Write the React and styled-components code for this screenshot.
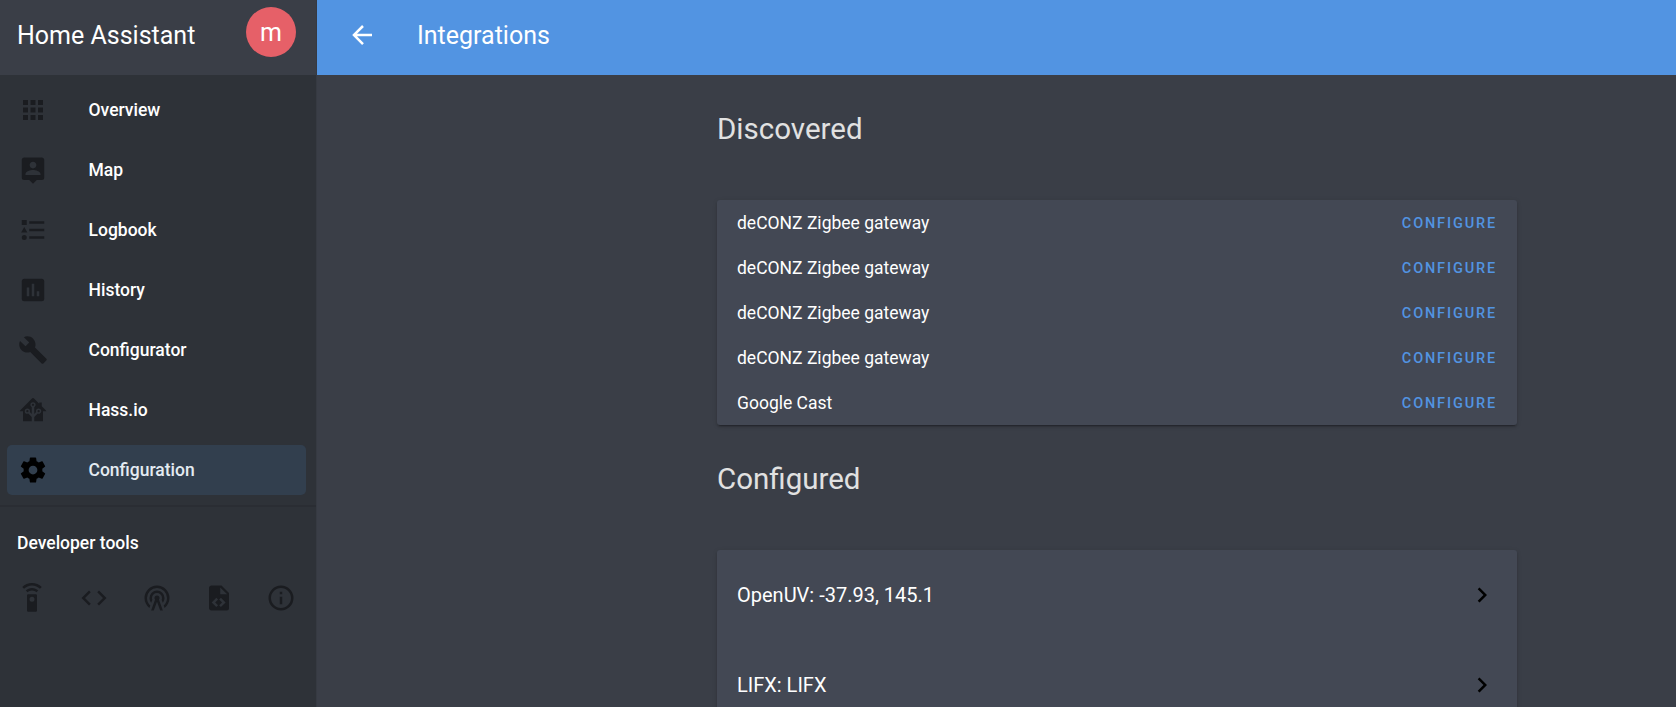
import React from "react";
import styled, { createGlobalStyle } from "styled-components";

const Global = createGlobalStyle`
  html, body {
    margin: 0;
    padding: 0;
    height: 100%;
    overflow: hidden;
    background: #3a3e47;
    font-family: Roboto, "Noto Sans", sans-serif;
  }
`;

const Layout = styled.div`
  display: grid;
  grid-template-columns: 317px 1fr;
  height: 100vh;
  overflow: hidden;
`;

const Sidebar = styled.aside`
  display: flex;
  flex-direction: column;
  background: #2e3238;
  border-right: 1px solid #363a42;
  box-sizing: border-box;
`;

const SideHeader = styled.div`
  height: 75px;
  flex: none;
  display: flex;
  align-items: flex-start;
  justify-content: space-between;
  padding: 0 20px 0 17px;
  background: #3a3e47;
  color: #fff;
  font-size: 25px;
`;

const Brand = styled.span`
  line-height: 71px;
`;

const Avatar = styled.div`
  width: 50px;
  height: 50px;
  margin-top: 7px;
  border-radius: 50%;
  background: #e66068;
  color: #fff;
  font-size: 25px;
  display: flex;
  align-items: center;
  justify-content: center;
`;

const Nav = styled.nav`
  display: flex;
  flex-direction: column;
  gap: 10px;
  padding: 10px 10px 10px 7px;
  border-bottom: 2px solid #2a2d33;
`;

const NavItem = styled.div`
  height: 50px;
  padding-left: 11px;
  display: flex;
  align-items: center;
  border-radius: 5px;
  background: ${(p) => (p.$active ? "#323f4e" : "transparent")};
  color: ${(p) => (p.$active ? "#e4ebf2" : "#fff")};
  font-size: 17.5px;
  font-weight: 500;
`;

const NavIcon = styled.svg`
  width: 30px;
  height: 30px;
  flex: none;
  margin-right: 40.5px;
  fill: ${(p) => (p.$active ? "#000" : "#1a1c20")};
`;

const SubHeader = styled.div`
  margin-top: 22px;
  padding-left: 17px;
  height: 28px;
  line-height: 28px;
  color: #fff;
  font-size: 17.5px;
  font-weight: 500;
`;

const DevTools = styled.div`
  display: flex;
  gap: 32.25px;
  padding: 26px 0 0 17px;
`;

const DevIcon = styled.svg`
  width: 30px;
  height: 30px;
  flex: none;
  fill: #1a1c20;
`;

const Main = styled.div`
  display: flex;
  flex-direction: column;
  min-width: 0;
`;

const TopBar = styled.header`
  height: 75px;
  flex: none;
  display: flex;
  align-items: flex-start;
  padding-left: 30px;
  background: #5294e2;
  color: #fff;
  font-size: 25px;
  line-height: 71px;
`;

const BackIcon = styled.svg`
  width: 30px;
  height: 30px;
  flex: none;
  margin: 20px 40px 0 0;
  fill: #fff;
`;

const Content = styled.main`
  padding-left: 400px;
  width: 800px;
`;

const SectionTitle = styled.h2`
  margin: 34px 0 51px;
  height: 40px;
  line-height: 40px;
  color: #e1e1e1;
  font-size: 29.5px;
  font-weight: 400;
`;

const Card = styled.div`
  background: #434854;
  border-radius: 3px;
  box-shadow: 0 2px 2px rgba(0, 0, 0, 0.14), 0 1px 5px rgba(0, 0, 0, 0.12),
    0 3px 1px -2px rgba(0, 0, 0, 0.2);
`;

const Row = styled.div`
  height: ${(p) => (p.$tall ? "90px" : "45px")};
  display: flex;
  align-items: center;
  justify-content: space-between;
  padding: 0 20px;
  color: #fff;
  font-size: ${(p) => (p.$tall ? "20px" : "17.5px")};
`;

const ConfigureButton = styled.span`
  padding-top: 2px;
  color: #5294e2;
  font-size: 14.5px;
  font-weight: 500;
  letter-spacing: 1.85px;
`;

const Chevron = styled.svg`
  width: 30px;
  height: 30px;
  fill: #000;
`;

const Icon = ({ as: Comp, d, $active }) => (
  <Comp viewBox="0 0 24 24" $active={$active}>
    <path d={d} />
  </Comp>
);

const navItems = [
  {
    label: "Overview",
    d: "M16,20H20V16H16M16,14H20V10H16M10,8H14V4H10M16,8H20V4H16M10,14H14V10H10M4,14H8V10H4M4,20H8V16H4M10,20H14V16H10M4,8H8V4H4V8Z",
  },
  {
    label: "Map",
    d: "M18,16H6V15.1C6,13.1 10,12 12,12C14,12 18,13.1 18,15.1M12,5.3C13.5,5.3 14.7,6.5 14.7,8C14.7,9.5 13.5,10.7 12,10.7C10.5,10.7 9.3,9.5 9.3,8C9.3,6.5 10.5,5.3 12,5.3M19,2H5C3.89,2 3,2.89 3,4V18A2,2 0 0,0 5,20H9L12,23L15,20H19A2,2 0 0,0 21,18V4C21,2.89 20.1,2 19,2Z",
  },
  {
    label: "Logbook",
    d: "M5,9.5L7.5,14H2.5L5,9.5M3,4H7V8H3V4M5,20A2,2 0 0,0 7,18A2,2 0 0,0 5,16A2,2 0 0,0 3,18A2,2 0 0,0 5,20M9,5V7H21V5H9M9,19H21V17H9V19M9,13H21V11H9V13Z",
  },
  {
    label: "History",
    d: "M17,17H15V13H17M13,17H11V7H13M9,17H7V10H9M19,3H5C3.89,3 3,3.89 3,5V19A2,2 0 0,0 5,21H19A2,2 0 0,0 21,19V5C21,3.89 20.1,3 19,3Z",
  },
  {
    label: "Configurator",
    d: "M22.7,19L13.6,9.9C14.5,7.6 14,4.9 12.1,3C10.1,1 7.1,0.6 4.7,1.7L9,6L6,9L1.6,4.7C0.4,7.1 0.9,10.1 2.9,12.1C4.8,14 7.5,14.5 9.8,13.6L18.9,22.7C19.3,23.1 19.9,23.1 20.3,22.7L22.6,20.4C23.1,20 23.1,19.3 22.7,19Z",
  },
  {
    label: "Hass.io",
    d: "M21.8,13H20V21H13V17.67L15.79,14.88L16.5,15C17.66,15 18.6,14.06 18.6,12.9C18.6,11.74 17.66,10.8 16.5,10.8A2.1,2.1 0 0,0 14.4,12.9L14.5,13.61L13,15.13V9.65C13.66,9.29 14.1,8.6 14.1,7.8A2.1,2.1 0 0,0 12,5.7A2.1,2.1 0 0,0 9.9,7.8C9.9,8.6 10.34,9.29 11,9.65V15.13L9.5,13.61L9.6,12.9A2.1,2.1 0 0,0 7.5,10.8A2.1,2.1 0 0,0 5.4,12.9A2.1,2.1 0 0,0 7.5,15L8.21,14.88L11,17.67V21H4V13H2.25C1.83,13 1.42,13 1.42,12.79C1.43,12.57 1.85,12.15 2.28,11.72L11,3C11.33,2.67 11.67,2.33 12,2.33C12.33,2.33 12.67,2.67 13,3L17,7V6H19V9L21.78,11.78C22.18,12.18 22.59,12.59 22.6,12.8C22.6,13 22.2,13 21.8,13M7.5,12A0.9,0.9 0 0,1 8.4,12.9A0.9,0.9 0 0,1 7.5,13.8A0.9,0.9 0 0,1 6.6,12.9A0.9,0.9 0 0,1 7.5,12M16.5,12C17,12 17.4,12.4 17.4,12.9C17.4,13.4 17,13.8 16.5,13.8A0.9,0.9 0 0,1 15.6,12.9A0.9,0.9 0 0,1 16.5,12M12,6.9C12.5,6.9 12.9,7.3 12.9,7.8C12.9,8.3 12.5,8.7 12,8.7C11.5,8.7 11.1,8.3 11.1,7.8C11.1,7.3 11.5,6.9 12,6.9Z",
  },
  {
    label: "Configuration",
    active: true,
    d: "M12,15.5A3.5,3.5 0 0,1 8.5,12A3.5,3.5 0 0,1 12,8.5A3.5,3.5 0 0,1 15.5,12A3.5,3.5 0 0,1 12,15.5M19.43,12.97C19.47,12.65 19.5,12.33 19.5,12C19.5,11.67 19.47,11.34 19.43,11L21.54,9.37C21.73,9.22 21.78,8.95 21.66,8.73L19.66,5.27C19.54,5.05 19.27,4.96 19.05,5.05L16.56,6.05C16.04,5.66 15.5,5.32 14.87,5.07L14.5,2.42C14.46,2.18 14.25,2 14,2H10C9.75,2 9.54,2.18 9.5,2.42L9.13,5.07C8.5,5.32 7.96,5.66 7.44,6.05L4.95,5.05C4.73,4.96 4.46,5.05 4.34,5.27L2.34,8.73C2.21,8.95 2.27,9.22 2.46,9.37L4.57,11C4.53,11.34 4.5,11.67 4.5,12C4.5,12.33 4.53,12.65 4.57,12.97L2.46,14.63C2.27,14.78 2.21,15.05 2.34,15.27L4.34,18.73C4.46,18.95 4.73,19.03 4.95,18.95L7.44,17.94C7.96,18.34 8.5,18.68 9.13,18.93L9.5,21.58C9.54,21.82 9.75,22 10,22H14C14.25,22 14.46,21.82 14.5,21.58L14.87,18.93C15.5,18.67 16.04,18.34 16.56,17.94L19.05,18.95C19.27,19.03 19.54,18.95 19.66,18.73L21.66,15.27C21.78,15.05 21.73,14.78 21.54,14.63L19.43,12.97Z",
  },
];

const devIcons = [
  "M12,0C8.96,0 6.21,1.23 4.22,3.22L5.63,4.63C7.26,3 9.5,2 12,2C14.5,2 16.74,3 18.36,4.64L19.77,3.23C17.79,1.23 15.04,0 12,0M7.05,6.05L8.46,7.46C9.37,6.56 10.62,6 12,6C13.38,6 14.63,6.56 15.54,7.46L16.95,6.05C15.68,4.78 13.93,4 12,4C10.07,4 8.32,4.78 7.05,6.05M12,15A2,2 0 0,1 10,13A2,2 0 0,1 12,11A2,2 0 0,1 14,13A2,2 0 0,1 12,15M15,9H9A1,1 0 0,0 8,10V22A1,1 0 0,0 9,23H15A1,1 0 0,0 16,22V10A1,1 0 0,0 15,9Z",
  "M14.6,16.6L19.2,12L14.6,7.4L16,6L22,12L16,18L14.6,16.6M9.4,16.6L4.8,12L9.4,7.4L8,6L2,12L8,18L9.4,16.6Z",
  "M12,10A2,2 0 0,1 14,12C14,12.5 13.82,12.94 13.53,13.29L16.7,22H14.57L12,14.93L9.43,22H7.3L10.47,13.29C10.18,12.94 10,12.5 10,12A2,2 0 0,1 12,10M12,8A4,4 0 0,0 8,12C8,12.5 8.1,13 8.28,13.46L7.4,15.86C6.53,14.81 6,13.47 6,12A6,6 0 0,1 12,6A6,6 0 0,1 18,12C18,13.47 17.47,14.81 16.6,15.86L15.72,13.46C15.9,13 16,12.5 16,12A4,4 0 0,0 12,8M12,4A8,8 0 0,0 4,12C4,14.36 5,16.5 6.64,17.94L5.92,19.94C3.54,18.11 2,15.23 2,12A10,10 0 0,1 12,2A10,10 0 0,1 22,12C22,15.23 20.46,18.11 18.08,19.94L17.36,17.94C19,16.5 20,14.36 20,12A8,8 0 0,0 12,4Z",
  "M13,9H18.5L13,3.5V9M6,2H14L20,8V20A2,2 0 0,1 18,22H6C4.89,22 4,21.1 4,20V4C4,2.89 4.89,2 6,2M6.12,15.5L9.86,19.24L11.28,17.83L8.95,15.5L11.28,13.17L9.86,11.76L6.12,15.5M17.28,15.5L13.54,11.76L12.12,13.17L14.45,15.5L12.12,17.83L13.54,19.24L17.28,15.5Z",
  "M11,9H13V7H11M12,20C7.59,20 4,16.41 4,12C4,7.59 7.59,4 12,4C16.41,4 20,7.59 20,12C20,16.41 16.41,20 12,20M12,2A10,10 0 0,0 2,12A10,10 0 0,0 12,22A10,10 0 0,0 22,12A10,10 0 0,0 12,2M11,17H13V11H11V17Z",
];

const discovered = [
  "deCONZ Zigbee gateway",
  "deCONZ Zigbee gateway",
  "deCONZ Zigbee gateway",
  "deCONZ Zigbee gateway",
  "Google Cast",
];

const configured = ["OpenUV: -37.93, 145.1", "LIFX: LIFX"];

const App = () => {
  return (
    <Layout>
      <Global />
      <Sidebar>
        <SideHeader>
          <Brand>Home Assistant</Brand>
          <Avatar>m</Avatar>
        </SideHeader>
        <Nav>
          {navItems.map((item) => (
            <NavItem key={item.label} $active={item.active}>
              <Icon as={NavIcon} d={item.d} $active={item.active} />
              {item.label}
            </NavItem>
          ))}
        </Nav>
        <SubHeader>Developer tools</SubHeader>
        <DevTools>
          {devIcons.map((d) => (
            <Icon key={d} as={DevIcon} d={d} />
          ))}
        </DevTools>
      </Sidebar>
      <Main>
        <TopBar>
          <Icon
            as={BackIcon}
            d="M20,11V13H8L13.5,18.5L12.08,19.92L4.16,12L12.08,4.08L13.5,5.5L8,11H20Z"
          />
          Integrations
        </TopBar>
        <Content>
          <SectionTitle>Discovered</SectionTitle>
          <Card>
            {discovered.map((name, i) => (
              <Row key={i}>
                {name}
                <ConfigureButton>CONFIGURE</ConfigureButton>
              </Row>
            ))}
          </Card>
          <SectionTitle>Configured</SectionTitle>
          <Card>
            {configured.map((name) => (
              <Row key={name} $tall>
                {name}
                <Icon
                  as={Chevron}
                  d="M8.59,16.58L13.17,12L8.59,7.41L10,6L16,12L10,18L8.59,16.58Z"
                />
              </Row>
            ))}
          </Card>
        </Content>
      </Main>
    </Layout>
  );
};

export default App;
